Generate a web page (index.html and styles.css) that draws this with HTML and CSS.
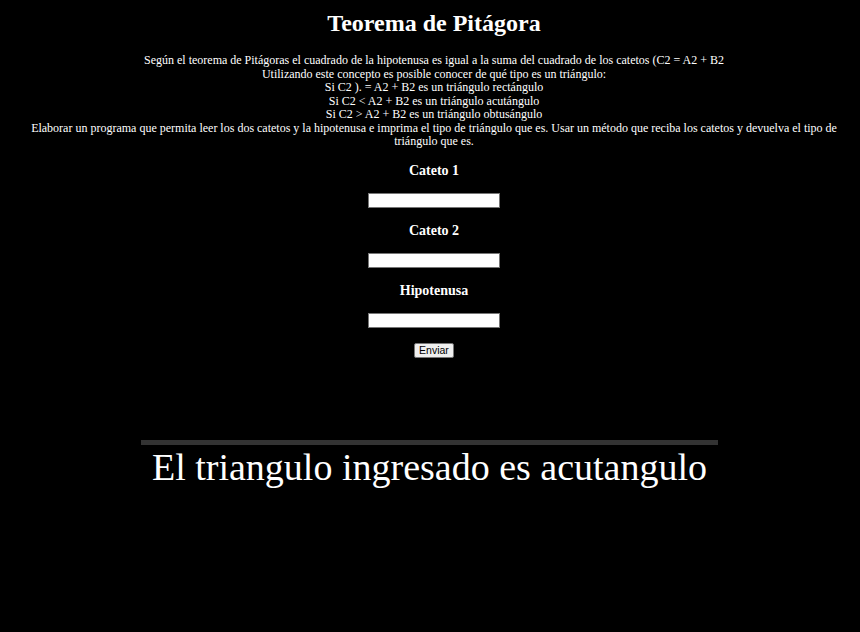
FILE: index.html
```html
<!DOCTYPE html>
<html lang="es">
<head>
<meta charset="utf-8">
<title>Teorema de Pitágora</title>
<link rel="stylesheet" href="styles.css">
</head>
<body>
<main class="page">
  <h1 class="title">Teorema de Pitágora</h1>
  <p class="statement">
    Según el teorema de Pitágoras el cuadrado de la hipotenusa es igual a la suma del cuadrado de los catetos (C2 = A2 + B2<br>
    Utilizando este concepto es posible conocer de qué tipo es un triángulo:<br>
    Si C2 ). = A2 + B2 es un triángulo rectángulo<br>
    Si C2 &lt; A2 + B2 es un triángulo acutángulo<br>
    Si C2 &gt; A2 + B2 es un triángulo obtusángulo<br>
    Elaborar un programa que permita leer los dos catetos y la hipotenusa e imprima el tipo de triángulo que es. Usar un método que reciba los catetos y devuelva el tipo de triángulo que es.
  </p>
  <form class="form">
    <label class="label" for="c1">Cateto 1</label>
    <input class="field" id="c1" type="text">
    <label class="label" for="c2">Cateto 2</label>
    <input class="field" id="c2" type="text">
    <label class="label" for="h">Hipotenusa</label>
    <input class="field" id="h" type="text">
    <button class="submit" type="button">Enviar</button>
  </form>
  <section class="result">
    <div class="rule"></div>
    <p class="result-text">El triangulo ingresado es acutangulo</p>
  </section>
</main>
</body>
</html>
```
FILE: styles.css
```css
html, body {
  margin: 0;
  padding: 0;
  background: #000;
  color: #fff;
  font-family: "Liberation Serif", "Times New Roman", serif;
}
.page {
  display: flex;
  flex-direction: column;
  align-items: center;
  padding: 10px 0 0 8px;
}
.title {
  margin: 0;
  font-size: 24px;
  line-height: 26px;
  font-weight: bold;
}
.statement {
  margin: 18px 0 0;
  font-size: 12px;
  line-height: 13.5px;
  text-align: center;
  padding: 0 4px;
}
.form {
  display: flex;
  flex-direction: column;
  align-items: center;
  margin-top: 14px;
}
.label {
  font-size: 14px;
  font-weight: bold;
  line-height: 16px;
  margin-bottom: 14px;
}
.field {
  width: 132px;
  height: 15px;
  box-sizing: border-box;
  border: 1px solid #767676;
  background: #fff;
  padding: 0;
  margin: 0 0 15px;
}
.submit {
  margin-top: 0;
  width: 40px;
  height: 15px;
  padding: 0;
  font-family: "Liberation Sans", Arial, sans-serif;
  font-size: 10.5px;
  line-height: 13px;
  background: #efefef;
  color: #000;
  border: 1px solid #767676;
  border-radius: 2px;
}
.result {
  width: 577px;
  margin: 82px 9px 0 0;
  display: flex;
  flex-direction: column;
  align-items: center;
}
.rule {
  width: 100%;
  height: 5px;
  background: #333;
}
.result-text {
  margin: 1px 0 0;
  font-size: 38px;
  line-height: 42px;
}
```
